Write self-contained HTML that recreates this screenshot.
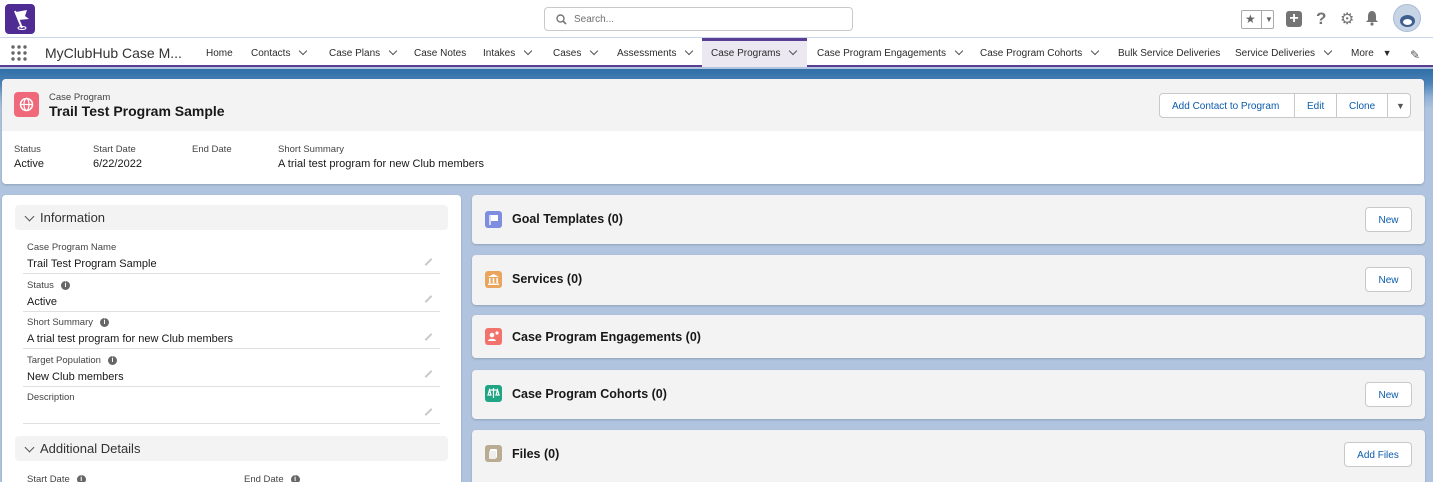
<!DOCTYPE html>
<html><head><meta charset="utf-8"><style>
*{box-sizing:border-box;margin:0;padding:0}
html,body{width:1433px;height:482px;overflow:hidden}
body{font-family:"Liberation Sans",sans-serif;color:#181818;background:#b0c4df;position:relative;font-size:11px}
.abs{position:absolute}
.top{left:0;top:0;width:1433px;height:38px;background:#fff;border-bottom:1px solid #c9d6ea}
.nav{left:0;top:38px;width:1433px;height:29px;background:#fff;border-bottom:2px solid #5a3e94}
.banner{left:0;top:69px;width:1433px;height:40px;background:linear-gradient(#2f6ea6 0,#4a82b8 14px,#8fb0d6 28px,#b0c4df 40px)}
.ni{position:absolute;top:48px;font-size:10px;color:#2b2b2b}
.chev{display:inline-block;width:6px;height:6px;border-right:1.2px solid #555;border-bottom:1.2px solid #555;transform:rotate(45deg);margin-left:10px;position:relative;top:-2px}
.card{position:absolute;background:#f3f3f3;border-radius:4px;box-shadow:0 1px 2px rgba(0,0,0,.18)}
.btn{position:absolute;background:#fff;border:1px solid #c9c9c9;border-radius:4px;color:#0b5cab;font-size:10px;text-align:center}
.ico{position:absolute;width:17px;height:17px;border-radius:3px}
.h{position:absolute;font-size:12.5px;font-weight:bold}
.lbl{position:absolute;font-size:9.5px;color:#444}
.val{position:absolute;font-size:11px;color:#181818}
.line{position:absolute;left:23px;width:417px;height:1px;background:#e0e0e0}
.pen{position:absolute;left:424px;width:9px;height:2px;background:#c9c9c9;transform:rotate(-45deg)}
.i{display:inline-block;width:9px;height:9px;border-radius:50%;background:#666;color:#fff;font-size:7px;line-height:9px;text-align:center;font-weight:bold;margin-left:7px;vertical-align:1px}
.sec{position:absolute;left:15px;width:433px;height:25px;background:#f3f3f3;border-radius:4px;font-size:13px;color:#333;padding:5px 0 0 25px}
.sec:before{content:"";position:absolute;left:11px;top:8px;width:6px;height:6px;border-right:1.2px solid #555;border-bottom:1.2px solid #555;transform:rotate(45deg)}
</style></head><body>
<div class="abs top"></div>
<div class="abs" style="left:5px;top:4px;width:30px;height:30px;border-radius:4px;background:#4f2b94">
<svg width="30" height="30" viewBox="0 0 30 30"><path d="M10 7 L17 24" stroke="#fff" stroke-width="2"/><path d="M11 8 L22 6 L20 12 L24 15 L13 16 Z" fill="#fff"/><ellipse cx="17" cy="24" rx="4" ry="1.5" fill="none" stroke="#fff"/></svg></div>
<div class="abs" style="left:544px;top:7px;width:309px;height:24px;border:1px solid #c9c9c9;border-radius:4px;background:#fff;font-size:10px;color:#707070;padding:6px 0 0 29px">Search...
<svg style="position:absolute;left:11px;top:6px" width="11" height="11"><circle cx="4.5" cy="4.5" r="3.5" fill="none" stroke="#777" stroke-width="1.4"/><path d="M7 7l3 3" stroke="#777" stroke-width="1.6"/></svg></div>
<div class="abs" style="left:1241px;top:10px;width:33px;height:19px;border:1px solid #aaa;border-radius:2px;background:#fff;font-size:12px;color:#666;padding:1px 0 0 3px">★<span style="position:absolute;left:19px;top:0;height:17px;border-left:1px solid #aaa;width:13px;font-size:8px;padding:4px 0 0 3px">▼</span></div>
<div class="abs" style="left:1286px;top:11px;width:16px;height:16px;background:#747474;border-radius:3px;color:#fff;font-size:16px;line-height:15px;text-align:center;font-weight:bold">+</div>
<div class="abs" style="left:1316px;top:9px;font-size:17px;color:#747474;font-weight:bold">?</div>
<div class="abs" style="left:1340px;top:9px;font-size:16px;color:#747474">⚙</div>
<div class="abs" style="left:1365px;top:10px;width:14px;height:14px"><svg width="14" height="16"><path d="M7 1C4 1 3 4 3 6v4l-2 2h12l-2-2V6c0-2-1-5-4-5z" fill="#747474"/><circle cx="7" cy="14" r="1.6" fill="#747474"/></svg></div>
<div class="abs" style="left:1393px;top:4px;width:28px;height:28px;border-radius:50%;background:#c7d4e6;border:1px solid #a9bcd6"><div style="position:absolute;left:6px;top:10px;width:15px;height:12px;border-radius:50%;background:#3d5f8e"></div><div style="position:absolute;left:9px;top:14px;width:9px;height:6px;border-radius:50%;background:#fff"></div></div>
<div class="abs nav"></div>
<div class="abs" style="left:11px;top:45px;width:16px;height:16px"><svg width="16" height="16" fill="#666"><circle cx="2" cy="2" r="1.7"/><circle cx="8" cy="2" r="1.7"/><circle cx="14" cy="2" r="1.7"/><circle cx="2" cy="8" r="1.7"/><circle cx="8" cy="8" r="1.7"/><circle cx="14" cy="8" r="1.7"/><circle cx="2" cy="14" r="1.7"/><circle cx="8" cy="14" r="1.7"/><circle cx="14" cy="14" r="1.7"/></svg></div>
<div class="abs" style="left:45px;top:45px;font-size:14px;color:#333">MyClubHub Case M...</div>
<div class="abs" style="left:702px;top:38px;width:105px;height:29px;background:#ebe8f2;border-top:3px solid #5a3e94"></div>
<div class="ni" style="left:206px">Home</div>
<div class="ni" style="left:251px">Contacts<span class="chev"></span></div>
<div class="ni" style="left:329px">Case Plans<span class="chev"></span></div>
<div class="ni" style="left:414px">Case Notes</div>
<div class="ni" style="left:483px">Intakes<span class="chev"></span></div>
<div class="ni" style="left:553px">Cases<span class="chev"></span></div>
<div class="ni" style="left:617px">Assessments<span class="chev"></span></div>
<div class="ni" style="left:711px">Case Programs<span class="chev"></span></div>
<div class="ni" style="left:817px">Case Program Engagements<span class="chev"></span></div>
<div class="ni" style="left:980px">Case Program Cohorts<span class="chev"></span></div>
<div class="ni" style="left:1118px">Bulk Service Deliveries</div>
<div class="ni" style="left:1235px">Service Deliveries<span class="chev"></span></div>
<div class="ni" style="left:1351px">More <span style="font-size:9px;margin-left:6px">▼</span></div>
<div class="ni" style="left:1410px;font-size:12px;color:#555">✎</div>
<div class="abs banner"></div>
<div class="card" style="left:2px;top:79px;width:1422px;height:105px;background:#fff;overflow:hidden"><div style="height:52px;background:#f3f3f3"></div></div>
<div class="ico" style="left:14px;top:92px;width:25px;height:25px;background:#f0697b;border-radius:4px"><svg width="25" height="25"><circle cx="12.5" cy="12.5" r="6" fill="none" stroke="#fff" stroke-width="1.5"/><ellipse cx="12.5" cy="12.5" rx="2.5" ry="6" fill="none" stroke="#fff" stroke-width="1.2"/><path d="M6.5 12.5h12" stroke="#fff" stroke-width="1.2"/></svg></div>
<div class="abs" style="left:49px;top:92px;font-size:9.5px;color:#444">Case Program</div>
<div class="abs" style="left:49px;top:103px;font-size:14px;font-weight:bold">Trail Test Program Sample</div>
<div class="btn" style="left:1159px;top:93px;width:252px;height:25px;padding-top:7px;text-align:left">
<span style="position:absolute;left:12px;top:7px">Add Contact to Program</span>
<span style="position:absolute;left:134px;top:0;height:23px;border-left:1px solid #c9c9c9;width:42px;padding:7px 0 0 12px">Edit</span>
<span style="position:absolute;left:176px;top:0;height:23px;border-left:1px solid #c9c9c9;width:51px;padding:7px 0 0 12px">Clone</span>
<span style="position:absolute;left:227px;top:0;height:23px;border-left:1px solid #c9c9c9;width:24px;padding:7px 0 0 8px;color:#555;font-size:9px">▼</span></div>
<div class="lbl" style="left:14px;top:144px">Status</div><div class="val" style="left:14px;top:158px">Active</div>
<div class="lbl" style="left:93px;top:144px">Start Date</div><div class="val" style="left:93px;top:158px">6/22/2022</div>
<div class="lbl" style="left:192px;top:144px">End Date</div>
<div class="lbl" style="left:278px;top:144px">Short Summary</div><div class="val" style="left:278px;top:158px">A trial test program for new Club members</div>
<div class="card" style="left:2px;top:195px;width:459px;height:300px;background:#fff"></div>
<div class="sec" style="top:205px">Information</div>
<div class="lbl" style="left:27px;top:242px">Case Program Name</div><div class="val" style="left:27px;top:258px">Trail Test Program Sample</div><div class="pen" style="top:261px"></div><div class="line" style="top:273px"></div>
<div class="lbl" style="left:27px;top:280px">Status<span class="i">i</span></div><div class="val" style="left:27px;top:296px">Active</div><div class="pen" style="top:298px"></div><div class="line" style="top:311px"></div>
<div class="lbl" style="left:27px;top:317px">Short Summary<span class="i">i</span></div><div class="val" style="left:27px;top:333px">A trial test program for new Club members</div><div class="pen" style="top:336px"></div><div class="line" style="top:348px"></div>
<div class="lbl" style="left:27px;top:355px">Target Population<span class="i">i</span></div><div class="val" style="left:27px;top:371px">New Club members</div><div class="pen" style="top:373px"></div><div class="line" style="top:386px"></div>
<div class="lbl" style="left:27px;top:392px">Description</div><div class="pen" style="top:411px"></div><div class="line" style="top:423px"></div>
<div class="sec" style="top:436px">Additional Details</div>
<div class="lbl" style="left:27px;top:474px">Start Date<span class="i">i</span></div>
<div class="lbl" style="left:244px;top:474px">End Date<span class="i">i</span></div>

<div class="card" style="left:472px;top:195px;width:953px;height:49px"></div>
<div class="ico" style="left:485px;top:211px;background:#7f8de1"><svg width="17" height="17"><path d="M5 4v10" stroke="#fff" stroke-width="1.4"/><path d="M6 4h7v6H6z" fill="#fff"/></svg></div>
<div class="h" style="left:512px;top:212px">Goal Templates (0)</div>
<div class="btn" style="left:1365px;top:207px;width:47px;height:25px;padding-top:7px">New</div>

<div class="card" style="left:472px;top:255px;width:953px;height:50px"></div>
<div class="ico" style="left:485px;top:271px;background:#e9a55d"><svg width="17" height="17" fill="#fff"><path d="M3 6l5.5-3 5.5 3z"/><rect x="4" y="7" width="1.5" height="5"/><rect x="7.7" y="7" width="1.5" height="5"/><rect x="11.4" y="7" width="1.5" height="5"/><rect x="3" y="12.5" width="11" height="1.5"/></svg></div>
<div class="h" style="left:512px;top:272px">Services (0)</div>
<div class="btn" style="left:1365px;top:267px;width:47px;height:25px;padding-top:7px">New</div>

<div class="card" style="left:472px;top:315px;width:953px;height:43px"></div>
<div class="ico" style="left:485px;top:328px;background:#f2726c"><svg width="17" height="17" fill="#fff"><circle cx="7" cy="7" r="2.3"/><path d="M3 13c0-3 8-3 8 0z"/><circle cx="12" cy="5" r="1.6"/></svg></div>
<div class="h" style="left:512px;top:330px">Case Program Engagements (0)</div>

<div class="card" style="left:472px;top:370px;width:953px;height:49px"></div>
<div class="ico" style="left:485px;top:385px;background:#1fa584"><svg width="17" height="17" stroke="#fff" fill="none" stroke-width="1.2"><path d="M8.5 3v10M4 5h9M3 10l1.5-5 1.5 5zM11 10l1.5-5 1.5 5z"/></svg></div>
<div class="h" style="left:512px;top:387px">Case Program Cohorts (0)</div>
<div class="btn" style="left:1365px;top:382px;width:47px;height:25px;padding-top:7px">New</div>

<div class="card" style="left:472px;top:430px;width:953px;height:60px"></div>
<div class="ico" style="left:485px;top:445px;background:#baac93"><svg width="17" height="17" fill="#fff"><rect x="5" y="4" width="7" height="9" rx="1"/><rect x="4" y="6" width="7" height="8" rx="1" fill="#eee"/></svg></div>
<div class="h" style="left:512px;top:447px">Files (0)</div>
<div class="btn" style="left:1344px;top:442px;width:68px;height:25px;padding-top:7px">Add Files</div>
</body></html>
